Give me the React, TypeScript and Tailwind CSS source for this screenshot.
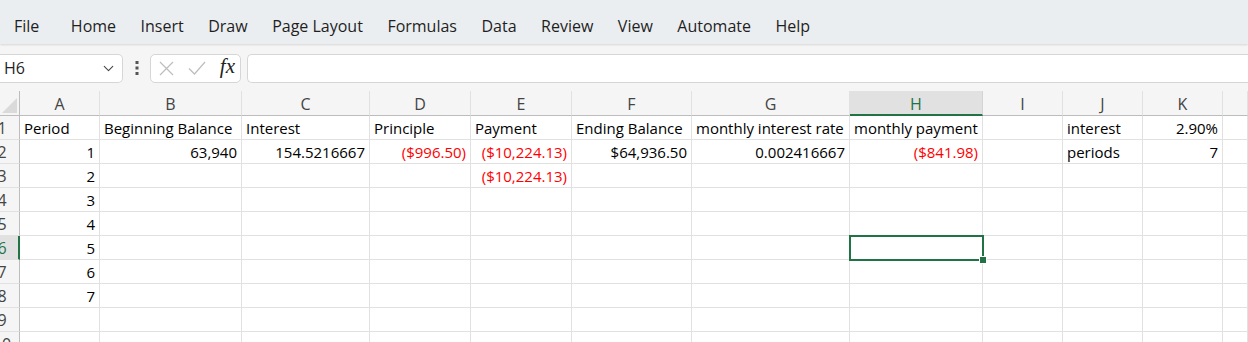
import { ChevronDown } from "lucide-react";

type Cell = { t: string; right?: boolean; red?: boolean };

const cols = ["A", "B", "C", "D", "E", "F", "G", "H", "I", "J", "K", ""];
const menu = ["File", "Home", "Insert", "Draw", "Page Layout", "Formulas", "Data", "Review", "View", "Automate", "Help"];

const data: Record<number, Record<string, Cell>> = {
  1: {
    A: { t: "Period" },
    B: { t: "Beginning Balance" },
    C: { t: "Interest" },
    D: { t: "Principle" },
    E: { t: "Payment" },
    F: { t: "Ending Balance" },
    G: { t: "monthly interest rate" },
    H: { t: "monthly payment" },
    J: { t: "interest" },
    K: { t: "2.90%", right: true },
  },
  2: {
    A: { t: "1", right: true },
    B: { t: "63,940", right: true },
    C: { t: "154.5216667", right: true },
    D: { t: "($996.50)", right: true, red: true },
    E: { t: "($10,224.13)", right: true, red: true },
    F: { t: "$64,936.50", right: true },
    G: { t: "0.002416667", right: true },
    H: { t: "($841.98)", right: true, red: true },
    J: { t: "periods" },
    K: { t: "7", right: true },
  },
  3: {
    A: { t: "2", right: true },
    E: { t: "($10,224.13)", right: true, red: true },
  },
  4: { A: { t: "3", right: true } },
  5: { A: { t: "4", right: true } },
  6: { A: { t: "5", right: true } },
  7: { A: { t: "6", right: true } },
  8: { A: { t: "7", right: true } },
};

const rows = [1, 2, 3, 4, 5, 6, 7, 8, 9, 10];

const MenuBar = () => (
  <div className="h-[44px] bg-[#ebeef0] flex items-center pl-[14px] pt-[7px] gap-[24.5px] text-[16px] text-[#1f1f1f] shadow-[0_1px_2px_rgba(0,0,0,0.12)] relative z-10">
    {menu.map((m, i) => (
      <span key={m} className={i === 0 ? "mr-[7px]" : ""}>
        {m}
      </span>
    ))}
  </div>
);

const FormulaBar = () => (
  <div className="h-[47px] bg-[#f5f5f5] flex items-center pt-[1px]">
    <div className="w-[123px] h-[29px] bg-white border border-[#d6d6d6] rounded-r-[5px] border-l-0 flex items-center justify-between pl-[4px] pr-[5px] text-[16px] text-[#1f1f1f]">
      <span>H6</span>
      <ChevronDown size={17} strokeWidth={1.5} className="text-[#444]" />
    </div>
    <div className="w-[27px] flex justify-center">
      <svg width="4" height="14" viewBox="0 0 4 14">
        <rect x="0.5" y="0" width="3" height="3" fill="#555" />
        <rect x="0.5" y="5.5" width="3" height="3" fill="#555" />
        <rect x="0.5" y="11" width="3" height="3" fill="#555" />
      </svg>
    </div>
    <div className="w-[91px] h-[29px] bg-white border border-[#d6d6d6] rounded-[5px] flex items-center pl-[8px] pr-[5px] justify-between">
      <svg width="15" height="15" viewBox="0 0 15 15">
        <path d="M1 1 L14 14 M14 1 L1 14" stroke="#bdbdbd" strokeWidth="1.2" fill="none" />
      </svg>
      <svg width="18" height="14" viewBox="0 0 18 14">
        <path d="M1 7.5 L6.5 13 L17 1" stroke="#bdbdbd" strokeWidth="1.2" fill="none" />
      </svg>
      <span className="font-['Liberation_Serif',serif] italic text-[21px] text-[#222] leading-none -mt-[3px]">fx</span>
    </div>
    <div className="flex-1 ml-[6px] h-[29px] bg-white border border-[#d6d6d6] border-r-0 rounded-l-[5px]" />
  </div>
);

const Sheet = () => (
  <div className="relative">
    <div className="grid grid-cols-[20px_80px_142px_128px_101px_101px_120px_158px_133px_80px_80px_80px_25px] grid-rows-[25px_repeat(10,24px)] font-['Open_Sans',sans-serif] text-[15px]">
      <div className="bg-[#f5f5f5] border-r border-b border-[#bdbdbd] relative overflow-hidden">
        <div className="absolute right-[2px] bottom-[2px] w-0 h-0 border-l-[15px] border-l-transparent border-b-[15px] border-b-[#dadada]" />
      </div>
      {cols.map((c, i) =>
        c === "H" ? (
          <div key={i} className="bg-[#e1e1e1] border-r border-[#d4d4d4] border-b-2 border-b-[#217346] flex items-center justify-center text-[#217346] text-[16px] pt-[2px]">
            {c}
          </div>
        ) : (
          <div key={i} className="bg-[#f5f5f5] border-r border-[#e1e1e1] border-b border-b-[#bdbdbd] flex items-center justify-center text-[#444] text-[16px] pt-[2px]">
            {c}
          </div>
        )
      )}
      {rows.map((r) => (
        <div key={r} className="contents">
          <div
            className={
              r === 6
                ? "bg-[#e1e1e1] border-r-2 border-r-[#217346] border-b border-[#e1e1e1] overflow-hidden flex items-center"
                : "bg-[#f5f5f5] border-r border-r-[#bdbdbd] border-b border-[#e1e1e1] overflow-hidden flex items-center"
            }
          >
            <div className={r === 6 ? "w-[26px] shrink-0 -ml-[11px] text-center text-[#217346] text-[16px]" : "w-[26px] shrink-0 -ml-[11px] text-center text-[#444] text-[16px]"}>
              {r}
            </div>
          </div>
          {cols.map((c, i) => {
            const cell = data[r]?.[c];
            return (
              <div
                key={i}
                className={
                  "border-r border-b border-[#e1e1e1] bg-white whitespace-nowrap overflow-hidden flex items-center px-[4px] pt-[1px] " +
                  (cell?.right ? "justify-end " : "justify-start ") +
                  (cell?.red ? "text-[#ff0000]" : "text-black")
                }
              >
                {cell?.t}
              </div>
            );
          })}
        </div>
      ))}
    </div>
    <div className="absolute left-[849px] top-[144px] w-[135px] h-[26px] border-2 border-[#217346] pointer-events-none" />
    <div className="absolute left-[979px] top-[165px] w-[8px] h-[8px] bg-white pointer-events-none" />
    <div className="absolute left-[980px] top-[166px] w-[6px] h-[6px] bg-[#217346] pointer-events-none" />
  </div>
);

export default function App() {
  return (
    <div className="w-[1248px] h-[342px] overflow-hidden bg-white font-['Open_Sans',sans-serif]">
      <MenuBar />
      <FormulaBar />
      <Sheet />
    </div>
  );
}
